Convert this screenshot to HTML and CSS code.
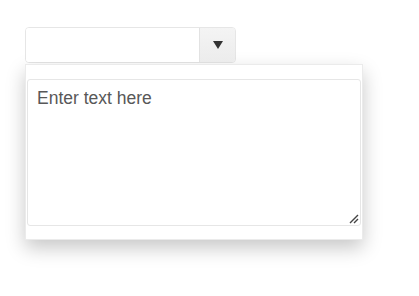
FILE: index.html
```html
<!DOCTYPE html>
<html>
<head>
<meta charset="utf-8">
<link rel="stylesheet" href="styles.css">
</head>
<body>
<div class="wrap">
  <div class="combo">
    <div class="field"></div>
    <div class="btn"><span class="tri"></span></div>
  </div>
  <div class="popup">
    <div class="area">
      <div class="placeholder">Enter text here</div>
      <svg class="grip" width="11" height="11" viewBox="0 0 11 11"><path d="M10 2L2 10M10 6L6 10" stroke="#444" stroke-width="1.4" fill="none"/></svg>
    </div>
  </div>
</div>
</body>
</html>
```
FILE: styles.css
```css
html, body { margin: 0; padding: 0; background: #fff; }
body { font-family: "Liberation Sans", Arial, sans-serif; min-height: 296px; }
.wrap { padding: 27px 0 40px 25px; }
.combo {
  width: 211px; height: 36px; box-sizing: border-box;
  border: 1px solid #e6e6e6; border-radius: 4px;
  display: flex; overflow: hidden;
}
.field { flex: 1; background: #fff; }
.btn {
  width: 35px; background: linear-gradient(#f4f4f4, #ececec); border-left: 1px solid #e2e2e2;
  display: flex; align-items: center; justify-content: center;
}
.tri {
  width: 0; height: 0;
  border-left: 5px solid transparent; border-right: 5px solid transparent;
  border-top: 8px solid #333;
}
.popup {
  margin-top: 1px;
  width: 338px; height: 176px; box-sizing: border-box;
  border: 1px solid #ebebeb; background: #fff;
  box-shadow: 0 8px 18px rgba(0,0,0,0.22);
  padding: 14px 1px 0 1px;
}
.area {
  position: relative;
  height: 147px; box-sizing: border-box;
  border: 1px solid #e6e6e6; border-radius: 3px;
  padding: 7px 9px;
}
.placeholder { color: #585858; font-size: 17.5px; line-height: 22px; }
.grip { position: absolute; right: 1px; bottom: 1px; }
```
